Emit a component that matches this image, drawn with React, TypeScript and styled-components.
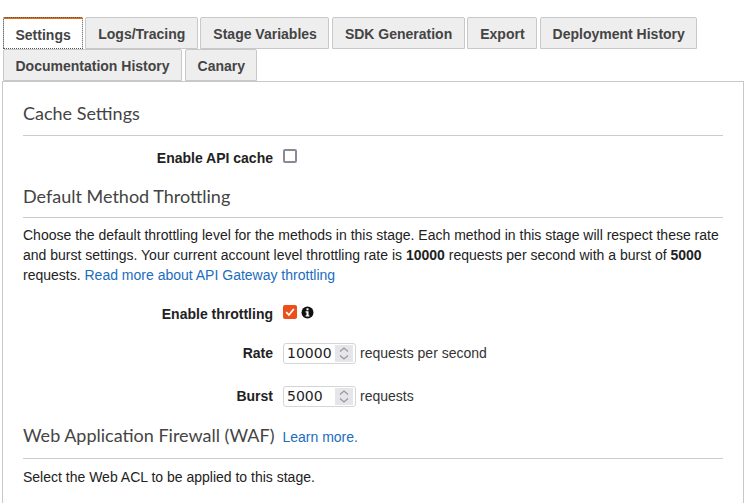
import React from 'react';
import styled, { createGlobalStyle } from 'styled-components';

const GlobalStyle = createGlobalStyle`
  html, body {
    margin: 0;
    padding: 0;
    height: 503px;
    overflow: hidden;
    background: #ffffff;
    font-family: "Liberation Sans", Arial, sans-serif;
    color: #222222;
  }
`;

const Page = styled.div`
  padding: 17px 11px 0 2px;
`;

const TabBar = styled.ul`
  display: flex;
  flex-wrap: wrap;
  list-style: none;
  margin: 0;
  padding: 0 0 0 0.5px;
  column-gap: 2.5px;
`;

const Tab = styled.li<{ $active?: boolean }>`
  box-sizing: border-box;
  height: 32px;
  padding: 0 11.5px 0 12px;
  line-height: 33px;
  font-size: 14px;
  font-weight: 700;
  color: #444444;
  white-space: nowrap;
  background: ${(p) => (p.$active ? '#ffffff' : '#eeeeee')};
  border: 1px solid #c8c8c8;
  border-bottom-color: ${(p) => (p.$active ? '#ffffff' : '#c8c8c8')};
  border-radius: 2px 2px 0 0;
  ${(p) => p.$active && `
    border-top: 2px solid #dd6b10;
    border-right: none;
    padding-right: 12px;
    line-height: 32px;
    outline: 1px dotted #555555;
    outline-offset: -1px;
  `}
`;

const Panel = styled.div`
  border: 1px solid #c8c8c8;
  height: 440px;
  padding: 0 20px;
  box-sizing: border-box;
  overflow: hidden;
`;

const Section = styled.div<{ $top: number }>`
  margin-top: ${(p) => p.$top}px;
`;

const Heading = styled.h3<{ $gap?: number }>`
  margin: 0;
  font-family: Lato, sans-serif;
  font-size: 18px;
  font-weight: 400;
  line-height: 22px;
  color: #444444;
  padding-bottom: ${(p) => p.$gap ?? 10}px;
  border-bottom: 1px solid #cccccc;
`;

const HeadingLink = styled.a`
  margin-left: 8px;
  font-family: "Liberation Sans", Arial, sans-serif;
  font-size: 14px;
  color: #1a6dbf;
`;

const Row = styled.div<{ $top: number }>`
  display: flex;
  align-items: center;
  height: 20px;
  margin-top: ${(p) => p.$top}px;
  font-size: 14px;
`;

const FieldLabel = styled.label`
  width: 250px;
  margin-right: 10px;
  text-align: right;
  font-weight: 700;
  color: #222222;
`;

const Checkbox = styled.span<{ $checked?: boolean }>`
  box-sizing: border-box;
  display: inline-flex;
  align-items: center;
  justify-content: center;
  width: 14px;
  height: 14px;
  margin-top: -4px;
  border-radius: 2px;
  border: ${(p) => (p.$checked ? 'none' : '2px solid #8a8a96')};
  background: ${(p) => (p.$checked ? '#ec4f1c' : '#ffffff')};
`;

const InfoIcon = styled.svg`
  width: 13px;
  height: 13px;
  margin: -4px 0 0 4px;
`;

const NumberBox = styled.div`
  box-sizing: border-box;
  display: flex;
  width: 73px;
  height: 21px;
  padding: 1px 2px 1px 1px;
  border: 1px solid #d5d5d5;
  border-radius: 3px;
  background: #ffffff;
`;

const NumberInput = styled.input`
  flex: 1;
  min-width: 0;
  border: none;
  outline: none;
  padding: 0 0 0 2px;
  background: transparent;
  font-family: "DejaVu Sans", sans-serif;
  font-size: 14px;
  color: #222222;
`;

const Spinner = styled.svg`
  flex: none;
  width: 18px;
  height: 17px;
  background: #e6e6ea;
`;

const Unit = styled.span`
  margin-left: 4px;
  color: #333333;
`;

const Paragraph = styled.p<{ $top: number }>`
  margin: ${(p) => p.$top}px 0 0;
  font-size: 14px;
  line-height: 20px;
  color: #222222;
`;

const TextLink = styled.a`
  color: #1a6dbf;
`;

const tabs = [
  'Settings',
  'Logs/Tracing',
  'Stage Variables',
  'SDK Generation',
  'Export',
  'Deployment History',
  'Documentation History',
  'Canary',
];

function NumberField({ value }: { value: string }) {
  return (
    <NumberBox>
      <NumberInput type='text' value={value} readOnly />
      <Spinner viewBox='0 0 18 17' fill='none' stroke='#999999' strokeWidth='1.3'>
        <path d='M5 6.5 9 3 13 6.5' />
        <path d='M5 10.5 9 14 13 10.5' />
      </Spinner>
    </NumberBox>
  );
}

export default function App() {
  return (
    <Page>
      <GlobalStyle />
      <TabBar>
        {tabs.map((tab, i) => (
          <Tab key={tab} $active={i === 0}>{tab}</Tab>
        ))}
      </TabBar>
      <Panel>
        <Section $top={20}>
          <Heading $gap={11}>Cache Settings</Heading>
          <Row $top={12}>
            <FieldLabel>Enable API cache</FieldLabel>
            <Checkbox />
          </Row>
        </Section>
        <Section $top={17}>
          <Heading>Default Method Throttling</Heading>
          <Paragraph $top={7}>
            Choose the default throttling level for the methods in this stage. Each method in this stage will respect these rate
            and burst settings. Your current account level throttling rate is <b>10000</b> requests per second with a burst of <b>5000</b> requests.{' '}
            <TextLink>Read more about API Gateway throttling</TextLink>
          </Paragraph>
          <Row $top={19}>
            <FieldLabel>Enable throttling</FieldLabel>
            <Checkbox $checked>
              <svg width='10' height='10' viewBox='0 0 10 10' fill='none' stroke='#ffffff' strokeWidth='1.8'>
                <path d='M1.2 5.2 3.9 8 8.8 2' />
              </svg>
            </Checkbox>
            <InfoIcon viewBox='0 0 13 13'>
              <circle cx='6.5' cy='6.5' r='6' fill='#111111' />
              <rect x='5.5' y='2.3' width='2' height='2' fill='#ffffff' />
              <path d='M4.6 5.3H7.5V9.3H8.4V10.5H4.6V9.3H5.5V6.5H4.6Z' fill='#ffffff' />
            </InfoIcon>
          </Row>
          <Row $top={19}>
            <FieldLabel>Rate</FieldLabel>
            <NumberField value='10000' />
            <Unit>requests per second</Unit>
          </Row>
          <Row $top={23}>
            <FieldLabel>Burst</FieldLabel>
            <NumberField value='5000' />
            <Unit>requests</Unit>
          </Row>
        </Section>
        <Section $top={18}>
          <Heading>
            Web Application Firewall (WAF)
            <HeadingLink>Learn more.</HeadingLink>
          </Heading>
          <Paragraph $top={8}>Select the Web ACL to be applied to this stage.</Paragraph>
        </Section>
      </Panel>
    </Page>
  );
}
